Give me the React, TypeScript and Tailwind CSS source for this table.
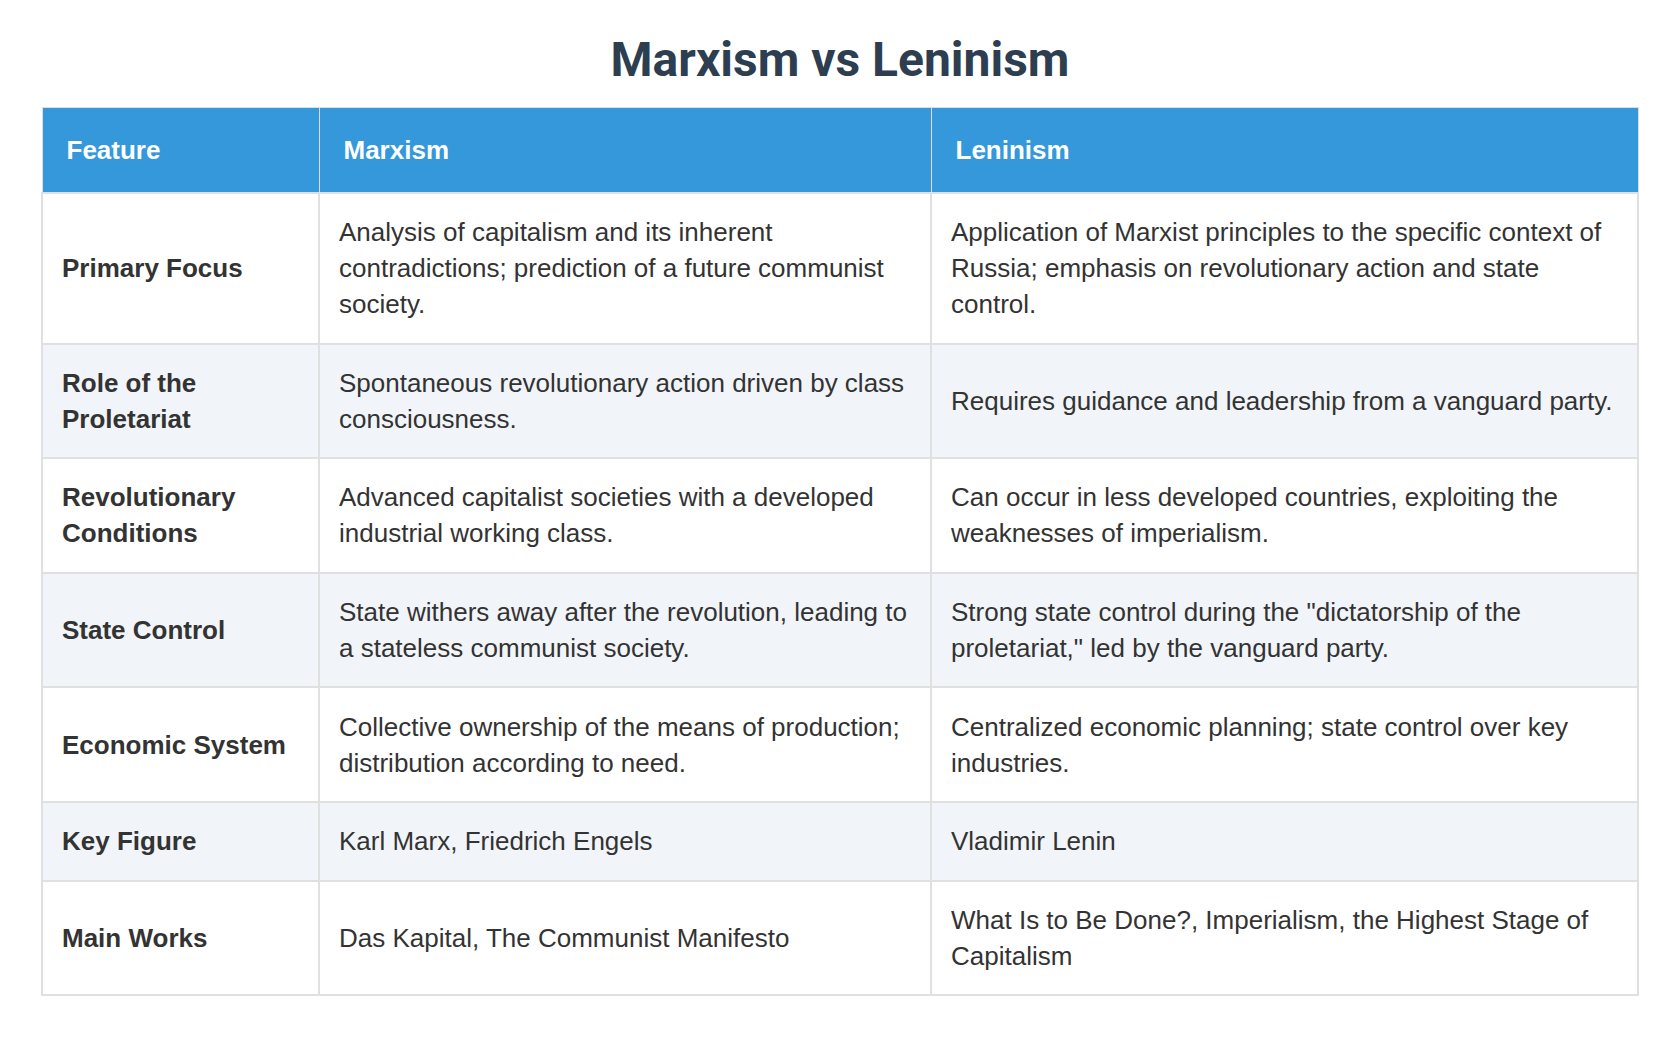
import React from 'react';

const rows = [
  {
    feature: 'Primary Focus',
    marxism: 'Analysis of capitalism and its inherent contradictions; prediction of a future communist society.',
    leninism: 'Application of Marxist principles to the specific context of Russia; emphasis on revolutionary action and state control.',
  },
  {
    feature: 'Role of the Proletariat',
    marxism: 'Spontaneous revolutionary action driven by class consciousness.',
    leninism: 'Requires guidance and leadership from a vanguard party.',
  },
  {
    feature: 'Revolutionary Conditions',
    marxism: 'Advanced capitalist societies with a developed industrial working class.',
    leninism: 'Can occur in less developed countries, exploiting the weaknesses of imperialism.',
  },
  {
    feature: 'State Control',
    marxism: 'State withers away after the revolution, leading to a stateless communist society.',
    leninism: 'Strong state control during the "dictatorship of the proletariat," led by the vanguard party.',
  },
  {
    feature: 'Economic System',
    marxism: 'Collective ownership of the means of production; distribution according to need.',
    leninism: 'Centralized economic planning; state control over key industries.',
  },
  {
    feature: 'Key Figure',
    marxism: 'Karl Marx, Friedrich Engels',
    leninism: 'Vladimir Lenin',
  },
  {
    feature: 'Main Works',
    marxism: 'Das Kapital, The Communist Manifesto',
    leninism: 'What Is to Be Done?, Imperialism, the Highest Stage of Capitalism',
  },
];

export default function App() {
  return (
    <main className="min-h-screen bg-white px-[41px] pt-[32px] font-['Liberation_Sans',Arial,sans-serif] text-[#333]">
      <h1 className="mb-[19px] text-center font-['Roboto',sans-serif] text-[48px] font-bold leading-[56px] text-[#2c3e50]">
        Marxism vs Leninism
      </h1>

      <table className="w-full table-fixed border-collapse text-[26px] leading-[36px]">
        <colgroup>
          <col className="w-[277px]" />
          <col className="w-[612px]" />
          <col />
        </colgroup>
        <thead>
          <tr className="bg-[#3498db] text-left text-white">
            <th className="border border-[#ddd] px-[24px] py-[24px] font-bold">Feature</th>
            <th className="border border-[#ddd] px-[24px] py-[24px] font-bold">Marxism</th>
            <th className="border border-[#ddd] px-[24px] py-[24px] font-bold">Leninism</th>
          </tr>
        </thead>
        <tbody>
          {rows.map((row, i) => (
            <tr key={row.feature} className={i % 2 === 1 ? 'bg-[#f1f5f9]' : 'bg-white'}>
              <td className="border-2 border-[#e0e0e0] px-[19px] py-[20.3px] font-bold">{row.feature}</td>
              <td className="border-2 border-[#e0e0e0] px-[19px] py-[20.3px]">{row.marxism}</td>
              <td className="border-2 border-[#e0e0e0] px-[19px] py-[20.3px]">{row.leninism}</td>
            </tr>
          ))}
        </tbody>
      </table>
    </main>
  );
}
